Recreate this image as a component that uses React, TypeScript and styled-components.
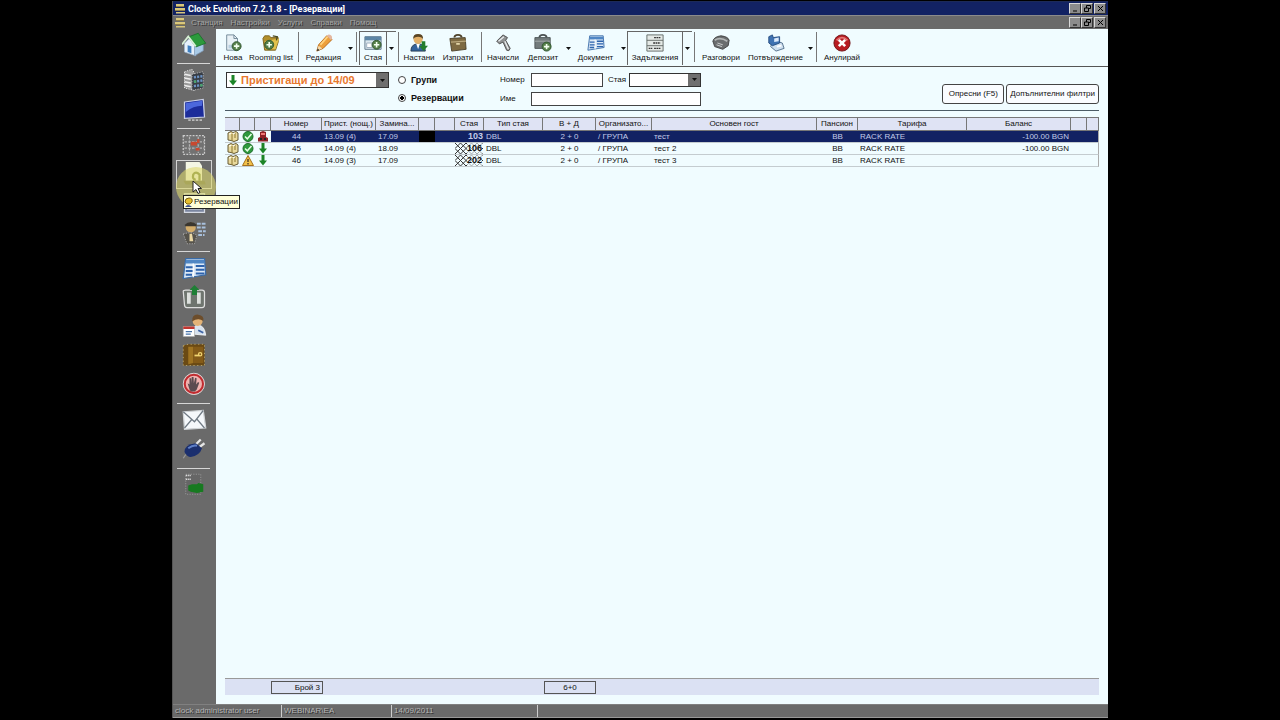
import React from "react";
import styled, { createGlobalStyle } from "styled-components";

const Global = createGlobalStyle`
  * { box-sizing: border-box; }
  body { margin: 0; background: #000; }
  button, input, select { font: inherit; color: inherit; }
`;

const navy = "#122263";
const grey = "#6a6a6a";
const paper = "#f0fcff";
const sans = `"Liberation Sans", Arial, sans-serif`;

const Stage = styled.div`
  min-height: 100vh;
  padding: 1px 172px 2px;
  display: flex;
  flex-direction: column;
  font-family: ${sans};
  font-size: 8px;
  line-height: 12px;
  color: #111;
`;
const Frame = styled.div`
  flex: 1;
  display: flex;
  flex-direction: column;
  background: ${grey};
  border-left: 1px solid #555;
`;
const Bar = styled.header<{ $tone: "title" | "menu" }>`
  height: 14px;
  display: flex;
  align-items: center;
  gap: 2px;
  padding: 0 2px;
  background: ${(p) => (p.$tone === "title" ? navy : grey)};
  border-top: 1px solid ${(p) => (p.$tone === "title" ? "#1c2a58" : "#8b8b8b")};
`;
const Title = styled.h1`
  margin: 0;
  flex: 1;
  font: bold 9px/12px Roboto, sans-serif;
  color: #fff;
`;
const Menu = styled.nav`
  flex: 1;
  display: flex;
  gap: 8px;
  padding-left: 3px;
`;
const MenuItem = styled.button`
  border: 0;
  padding: 0;
  background: none;
  color: #a4a4a4;
  text-shadow: 1px 1px 0 #333;
`;
const Caption = styled.div`
  display: flex;
`;
const CaptionButton = styled.button`
  width: 12px;
  height: 11px;
  padding: 0;
  display: grid;
  place-items: center;
  background: #8c8c8c;
  border: 1px solid;
  border-color: #d8d8d8 #333 #333 #d8d8d8;
  &:last-child { margin-left: 1px; }
`;
const Body = styled.div`
  flex: 1;
  display: flex;
`;
const Side = styled.nav`
  width: 43px;
  padding: 1px 2px 0 1px;
  position: relative;
`;
const SideButton = styled.button<{ $on?: boolean }>`
  width: 36px;
  height: 29px;
  margin-left: 2px;
  padding: 0;
  display: grid;
  place-items: center;
  background: none;
  border: 1px solid ${(p) => (p.$on ? "#d4d4d4" : "transparent")};
`;
const SideRule = styled.hr`
  margin: 4px 4px 2px 3px;
  border: 0;
  height: 1px;
  background: #d6d6d6;
`;
const Halo = styled.div`
  position: absolute;
  left: 3px;
  top: 138px;
  width: 40px;
  height: 40px;
  border-radius: 50%;
  background: rgba(222, 216, 110, 0.6);
`;
const Pointer = styled.svg`
  position: absolute;
  left: 19px;
  top: 151px;
  z-index: 2;
`;
const Tip = styled.div`
  position: absolute;
  left: 10px;
  top: 166px;
  height: 14px;
  padding: 0 1px 0 0;
  display: flex;
  align-items: center;
  gap: 1px;
  background: #ffffd8;
  border: 1px solid #222;
  white-space: nowrap;
  z-index: 1;
`;
const Main = styled.main`
  flex: 1;
  min-width: 0;
  display: flex;
  flex-direction: column;
  background: ${paper};
`;
const Tools = styled.div`
  height: 38px;
  padding: 2px 0 1px 4px;
  display: flex;
  border-bottom: 1px solid #555;
`;
const Tool = styled.button<{ $w: number; $down?: boolean }>`
  width: ${(p) => p.$w}px;
  padding: 3px 0 0;
  display: flex;
  flex-direction: column;
  align-items: center;
  justify-content: flex-start;
  white-space: nowrap;
  background: none;
  border: 0 solid #666;
  ${(p) => p.$down && "border-width: 1px 1px 0 1px; padding-top: 2px;"}
`;
const Drop = styled.button<{ $down?: boolean }>`
  width: 8px;
  padding: 0;
  display: grid;
  place-items: center;
  background: none;
  border: 0 solid #666;
  ${(p) => p.$down && "width: 9px; border-top-width: 1px;"}
`;
const Rule = styled.i`
  width: 1px;
  margin: 1px 2px 3px;
  background: #777;
`;
const Filters = styled.form`
  height: 44px;
  margin: 0 9px;
  padding: 5px 0 0 1px;
  display: flex;
  border-bottom: 1px solid #4c5c66;
`;
const Picker = styled.div`
  width: 163px;
  height: 16px;
  display: flex;
  align-items: center;
  border: 1px solid #333;
  background: #fff;
  svg { margin-left: 2px; }
`;
const PickerSelect = styled.select`
  flex: 1;
  min-width: 0;
  height: 14px;
  padding: 0 0 0 4px;
  border: 0;
  appearance: none;
  background: transparent;
  font: bold 11px/14px ${sans};
  color: #e8782e;
`;
const Knob = styled.span`
  width: 12px;
  align-self: stretch;
  display: grid;
  place-items: center;
  background: #6f6f6f;
  svg { margin: 0; }
`;
const Radios = styled.fieldset`
  width: 102px;
  margin: 2px 0 0 9px;
  padding: 0;
  border: 0;
  display: flex;
  flex-direction: column;
  gap: 6px;
`;
const RadioLabel = styled.label`
  height: 12px;
  display: flex;
  align-items: center;
  gap: 5px;
  font: bold 9px/12px ${sans};
`;
const Radio = styled.input`
  appearance: none;
  width: 8px;
  height: 8px;
  margin: 0;
  border: 1px solid #444;
  border-radius: 50%;
  background: #fff;
  &:checked { background: radial-gradient(circle, #000 0 2px, #fff 2px); }
`;
const Fields = styled.div`
  display: grid;
  grid-template-columns: 31px 72px 26px 72px;
  grid-template-rows: 15px 15px;
  row-gap: 4px;
  align-items: center;
`;
const FieldLabel = styled.label<{ $inset?: boolean }>`
  padding-left: ${(p) => (p.$inset ? 5 : 0)}px;
`;
const Box = styled.input<{ $wide?: boolean }>`
  width: 100%;
  height: 14px;
  padding: 0 2px;
  border: 1px solid #444;
  background: #fff;
  ${(p) => p.$wide && "grid-column: 2 / 5;"}
`;
const RoomPick = styled.div`
  height: 14px;
  display: flex;
  border: 1px solid #333;
  background: #fff;
`;
const RoomSelect = styled.select`
  flex: 1;
  min-width: 0;
  padding: 0;
  border: 0;
  appearance: none;
  background: transparent;
`;
const Actions = styled.div`
  margin: 12px 0 0 auto;
  display: flex;
  gap: 2px;
`;
const Action = styled.button`
  height: 20px;
  padding: 0 3px;
  min-width: 62px;
  border: 1px solid #444;
  border-radius: 3px;
  background: #fafcff;
  white-space: nowrap;
`;
const Grid = styled.table`
  margin: 6px 9px 0;
  width: calc(100% - 18px);
  table-layout: fixed;
  border-collapse: separate;
  border-spacing: 0;
`;
const Head = styled.th`
  height: 14px;
  padding: 0;
  line-height: 12px;
  font-weight: normal;
  text-align: center;
  white-space: nowrap;
  overflow: hidden;
  background: #dfe3f4;
  border: solid #777;
  border-width: 1px 1px 1px 0;
`;
const Row = styled.tr<{ $on?: boolean }>`
  color: ${(p) => (p.$on ? "#c3cbe8" : "#111")};
  td { background: ${(p) => (p.$on ? navy : "transparent")}; }
  td:nth-child(-n + 3) { background: transparent; }
  td:last-child { border-right: 1px solid #aaa; }
`;
const Cell = styled.td<{ $align?: string; $bold?: boolean }>`
  height: 12px;
  padding: 0 2px;
  line-height: 11px;
  text-align: ${(p) => p.$align || "left"};
  white-space: nowrap;
  overflow: hidden;
  border-bottom: 1px solid #c4ccd0;
  ${(p) => p.$bold && `font: bold 9px/11px ${sans}; padding: 0 1px;`}
  svg { display: block; margin: 0 auto; }
`;
const RoomCell = styled.span`
  display: flex;
  justify-content: flex-end;
`;
const BlackCell = styled.i`
  display: block;
  height: 11px;
  margin: 0 -2px;
  background: #000;
`;
const Summary = styled.footer`
  height: 17px;
  margin: auto 9px 9px;
  display: flex;
  align-items: center;
  padding-left: 46px;
  gap: 221px;
  background: #dbe1f3;
  border-top: 1px solid #999;
`;
const Total = styled.output<{ $end?: boolean }>`
  width: 52px;
  height: 13px;
  padding: 0 2px;
  line-height: 11px;
  text-align: ${(p) => (p.$end ? "right" : "center")};
  border: 1px solid #555;
`;
const Status = styled.footer`
  height: 14px;
  display: flex;
  line-height: 11px;
  color: #b4b4b4;
  border-top: 1px solid #808080;
  border-bottom: 1px solid #999;
  text-shadow: 1px 1px 0 #333;
`;
const Pane = styled.span<{ $w?: number }>`
  ${(p) => (p.$w ? `width: ${p.$w}px;` : "flex: 1;")}
  padding-left: 2px;
  border-right: ${(p) => (p.$w ? "1px solid #ccc" : "0")};
`;

/* ---------- drawings ---------- */
const Svg = ({ s = 20, children }: { s?: number; children: React.ReactNode }) => (
  <svg width={s} height={s} viewBox="0 0 20 20" aria-hidden="true">{children}</svg>
);
const Tri = () => (
  <svg width="5" height="3" viewBox="0 0 5 3" aria-hidden="true"><path d="M0 0h5L2.500 3z" fill="#111" /></svg>
);
const Arrow = ({ w = 8 }: { w?: number }) => (
  <svg width={w} height="11" viewBox="0 0 8 11" aria-hidden="true">
    <path d="M2.500 0h3v5.500h2.500L4 10.500 0 5.500h2.500z" fill="#1c8427" />
  </svg>
);
const AppLogo = () => (
  <svg width="11" height="11" viewBox="0 0 11 11" aria-hidden="true">
    <path d="M1 1h8v2H1zM0 5h10v2H0zM1 9h9v1.500H1z" fill="#d9c77c" />
    <path d="M1 3.500h8M0 7.500h10" stroke="#8f7f4a" />
  </svg>
);
const Plus = ({ x, y }: { x: number; y: number }) => (
  <g transform={`translate(${x} ${y})`}>
    <circle r="5" fill="#557f48" stroke="#2f5530" />
    <path d="M-3 0h6M0-3v6" stroke="#f4fff0" strokeWidth="1.800" />
  </g>
);
const NewIcon = () => (
  <Svg s={18}><path d="M3 1h8l4 4v13H3z" fill="#e8f1f6" stroke="#6d8594" /><path d="M11 1v4h4" fill="none" stroke="#6d8594" /><path d="M5 12h5v4H5z" fill="#b9cfe0" /><Plus x={14} y={13.500} /></Svg>
);
const FolderIcon = () => (
  <Svg s={18}><path d="M1 5l2-3h5l2 2h8v5l-3 9H3z" fill="#b28f2b" stroke="#7a611d" /><path d="M3 8l16-3-4 12H4z" fill="#e2c14c" /><path d="M12 2l5 1-1 4" fill="none" stroke="#4a4a20" strokeWidth="1.500" /><Plus x={8} y={12} /></Svg>
);
const PencilIcon = () => (
  <Svg s={18}><path d="M2 19l2-7L13 2l6 4L9 16z" fill="#eda03c" stroke="#b36a1d" /><path d="M13 2l2-1.500q4 0 4 4L18 7z" fill="#e3b7a0" /><path d="M2 19l2-6 4 3z" fill="#f4dcb0" /><path d="M2 19l1-3 2 2z" fill="#222" /><path d="M6 12l8-9" stroke="#ffd27e" strokeWidth="2" /></Svg>
);
const RoomIcon = () => (
  <Svg s={18}><path d="M1 3h18v14H1z" fill="#dbe7ee" stroke="#5a7284" /><path d="M1 3h18v4H1z" fill="#5d86a6" /><path d="M3 10h6v5H3z" fill="#fff" stroke="#9ab" /><Plus x={14} y={12} /></Svg>
);
const PersonIcon = () => (
  <Svg s={18}><path d="M1 19q0-8 8-8t8 8z" fill="#34639c" stroke="#23364d" /><path d="M7 11l2 6 2-6z" fill="#fff" /><circle cx="9" cy="6" r="5" fill="#e3b068" /><path d="M3.500 6Q3 0 9 0q6 0 5.500 6-1-3-5.500-3T3.500 6z" fill="#5a4524" /><path d="M13 8h4v5h3l-5 6-5-6h3z" fill="#237c2c" /></Svg>
);
const CaseIcon = () => (
  <Svg s={18}><path d="M6 4q0-3 4-3t4 3" fill="none" stroke="#4e422b" strokeWidth="2" /><path d="M1 5l17-1 1 13-16 2z" fill="#7e6a42" stroke="#4b3f28" /><path d="M2 9l17-1" stroke="#b9a77c" strokeWidth="1.500" /><path d="M8 11h4" stroke="#e2d3a6" strokeWidth="2" /></Svg>
);
const HammerIcon = () => (
  <Svg s={18}><path d="M3 8l7-7 5 3-2 3 5 9q-1 4-4 2L10 9l-4 2z" fill="#8f9192" stroke="#4a4a4a" /><path d="M5 8l6-5M12 8l4 9" stroke="#e9eced" strokeWidth="1.500" /></Svg>
);
const DepositIcon = () => (
  <Svg s={18}><path d="M6 4q0-3 4-3t4 3" fill="none" stroke="#4b5152" strokeWidth="2" /><path d="M1 4h17v12H1z" fill="#737b7c" stroke="#4a5152" /><path d="M1 8h17" stroke="#a9b0b1" /><Plus x={14} y={14} /></Svg>
);
const DocIcon = ({ s = 18 }: { s?: number }) => (
  <Svg s={s}><path d="M3 2h15l1 13-18 3z" fill="#dce9f6" stroke="#3a6ca8" /><path d="M3 3h15v3H3z" fill="#4f86c4" /><path d="M3 9h6M3 12h6M3 15h5M11 8h7M11 11h7M11 14h7" stroke="#2d63ad" strokeWidth="1.500" /><path d="M9 6v11" stroke="#fff" /></Svg>
);
const LedgerIcon = () => (
  <Svg s={18}><path d="M1 1h18v18H1z" fill="#e4e9e6" stroke="#5f6663" /><path d="M1 7h18M1 13h18" stroke="#5f6663" /><path d="M9 4h7M8 10h8M3 16h4M9 16h7" stroke="#333" strokeWidth="1.500" strokeDasharray="2 .6" /></Svg>
);
const PhoneIcon = () => (
  <Svg s={18}><path d="M1 8q1-5 9-6 8 1 9 5l-1 6-6 4-9-3z" fill="#6a6d6e" stroke="#3e4041" /><path d="M3 7q6-4 14 1" fill="none" stroke="#b2b5b6" strokeWidth="2" /><path d="M6 10l6 2M5 12l6 2" stroke="#d2d5d6" /></Svg>
);
const ConfirmIcon = () => (
  <Svg s={18}><path d="M7 7l10 3 2 6-9 3-6-5z" fill="#cfe0f0" stroke="#4e6b87" /><path d="M2 3l4-2 1 3 7-1v7l-8 3-4-3z" fill="#3f72b2" stroke="#244c80" /><path d="M8 5l5-1v4l-5 1z" fill="#dceafc" /><path d="M11 14l5-1" stroke="#fff" strokeWidth="2" /></Svg>
);
const CancelIcon = () => (
  <Svg s={18}><circle cx="10" cy="10" r="9" fill="#b81c22" stroke="#6d1114" /><path d="M4 7q6-6 12 0" fill="none" stroke="#e37a7a" strokeWidth="2" /><path d="M6.500 6.500l7 7M13.500 6.500l-7 7" stroke="#fff" strokeWidth="3" /></Svg>
);

const HouseIcon = () => (
  <Svg s={25}>
    <path d="M2 9l4-4 5 6v8l-9-3z" fill="#e6f0fa" stroke="#9db4cc" strokeWidth=".6" />
    <path d="M10 11l7-2v6l-7 4z" fill="#a9cbe8" stroke="#7f98b5" strokeWidth=".6" />
    <path d="M4.500 10.500l3 .8v5.700l-3-1z" fill="#3f7fc0" />
    <path d="M5 4l8-3 6 8-8 3z" fill="#2c9a3c" stroke="#146a24" strokeWidth=".6" />
    <path d="M0 10l5-6.500 6 8" fill="none" stroke="#d8efd6" strokeWidth="1.400" />
  </Svg>
);
const HotelIcon = () => (
  <Svg s={25}><path d="M2 3l6-2 2 3v14l-8-2z" fill="#9a9a9a" stroke="#dedede" strokeWidth=".8" strokeDasharray="1 1" /><path d="M8 5l9-2v13l-9 2z" fill="#383d45" stroke="#ccc" strokeWidth=".6" strokeDasharray="1 1" /><path d="M2 5l5 1M2 8l5 1M2 11l5 1M2 14l5 1" stroke="#eee" strokeWidth="1.300" /><path d="M9.500 7.500l7-1M9.500 11l7-1M9.500 14.500l7-1" stroke="#6d93c4" strokeWidth="2" strokeDasharray="1.700 .9" /><path d="M9.500 11l2-.3M14.500 14l2-.3" stroke="#4ba368" strokeWidth="2" /></Svg>
);
const MonitorIcon = () => (
  <Svg s={25}><path d="M2 4l15-2 1 14-16 1z" fill="#1c2c9a" stroke="#ccd2e6" /><path d="M3 5l13-2v4q-7 0-13 5z" fill="#4c68dc" /><path d="M5 18.500h11" stroke="#bbb" strokeWidth="1.300" strokeDasharray="2 1" /></Svg>
);
const PlanIcon = () => (
  <Svg s={25}><path d="M1 2h17v15H1z" fill="#727272" stroke="#ccc" strokeDasharray="1.500 1" /><path d="M2 7h16M2 12h16M6 3v13M13 3v13" stroke="#b4b4b4" strokeDasharray="2 1" /><path d="M7 7h5v3H7zM12 5h2v3h-2zM11 12h3v2h-3z" fill="#c8482f" /></Svg>
);
const ResIcon = () => (
  <Svg s={25}><path d="M3 0h11l2 3v12H3z" fill="#f4f6e4" /><path d="M1 15h17l1 3H3z" fill="#5d5e3c" /><path d="M14 15v-5q-3-3-5 0-1 4 2 4" fill="none" stroke="#6d7a2c" strokeWidth="1.800" /></Svg>
);
const FormIcon = () => (
  <Svg s={25}><path d="M2 2h16v15H2z" fill="#7b86a0" stroke="#d5d9e2" /><path d="M4 14h12" stroke="#eee" strokeWidth="1.500" /></Svg>
);
const WaiterIcon = () => (
  <Svg s={25}><circle cx="7" cy="6" r="4" fill="#d3ad6b" /><path d="M2 4q5-5 10 0l-1 1H3z" fill="#3a362f" /><path d="M1 11l6-1 5 2-2 7H4z" fill="#56534c" stroke="#bbb" strokeWidth=".6" strokeDasharray="1 1" /><path d="M6 11h2l1 6H6z" fill="#ecd9a6" /><path d="M12 3h7M12 6h7M13 9h6M13 12h5" stroke="#a8c0dc" strokeWidth="1.600" strokeDasharray="3 .8" /></Svg>
);
const BasketIcon = () => (
  <Svg s={25}><path d="M1 5q0-1 2-1h13q2 0 2 2v10q0 2-2 2H4q-2 0-2-2z" fill="#6f756f" stroke="#dedede" /><path d="M4 6h3v9H4zM12 6h3v9h-3z" fill="#dde0dd" /><path d="M8 8V4H6l4-4 4 4h-2v4z" fill="#1e7f35" /></Svg>
);
const ClerkIcon = () => (
  <Svg s={25}><path d="M8 16q0-7 5-7t6 8z" fill="#d7e2ee" stroke="#fff" strokeWidth=".6" /><circle cx="12.500" cy="5.500" r="4" fill="#e3b377" /><path d="M8 6q0-6 5-5.500 5 .5 4 5-4-3-9 .5z" fill="#6c4d2b" /><path d="M1 10h9v8H1z" fill="#fff" stroke="#aaa" strokeWidth=".5" /><path d="M1 10h9v2H1z" fill="#c3352f" /><path d="M3 14h5M3 16h4" stroke="#4672a8" /><path d="M13 13l4 2" stroke="#3f64a4" strokeWidth="1.500" /></Svg>
);
const DoorIcon = () => (
  <Svg s={25}><path d="M1 2l4-1h13v17H1z" fill="#6b4a13" stroke="#e0c97c" strokeWidth=".5" strokeDasharray="1 2" /><path d="M5 3h4v13l-4 1z" fill="#9f7422" /><path d="M9 3h8v13H9z" fill="#845b18" /><path d="M10 10h4" stroke="#f0d470" strokeWidth="1.400" /><circle cx="14.500" cy="9" r="1.300" fill="none" stroke="#f0d470" /></Svg>
);
const StopIcon = () => (
  <Svg s={25}><circle cx="9.500" cy="9.500" r="8.500" fill="#f0b3b0" stroke="#d8d8d8" strokeWidth=".8" /><circle cx="9.500" cy="9.500" r="7.300" fill="none" stroke="#c02c30" strokeWidth="1.600" /><path d="M6 14l-1.500-5 1.500 1V5h1.300v4l.5-5h1.400l.3 5 1-4.500 1.200.5-.4 5 1.500-2 1 .5-2 5.500-1.500 1.500H7z" fill="#5b4b50" /></Svg>
);
const MailIcon = () => (
  <Svg s={25}><path d="M1 3l16-1 2 14-17 1z" fill="#f5f8fb" stroke="#cfd3d6" /><path d="M1 3l9 8 7-9M2 16l6-7M18 16l-6-7" fill="none" stroke="#707a84" /></Svg>
);
const PlugIcon = () => (
  <Svg s={25}><path d="M11 6l4-4M14 8l4-3" stroke="#e6e6e6" strokeWidth="1.800" /><path d="M2 12q0-6 9-7l5 4q-2 6-9 7-3 0-5-4z" fill="#1b2f6e" /><path d="M5 9q4-3 7-2" fill="none" stroke="#5f80c8" strokeWidth="1.500" /><path d="M3 14l-2 3" stroke="#999" /></Svg>
);
const ExitIcon = () => (
  <Svg s={25}><path d="M3 1h12v16H3z" fill="#666" stroke="#999" strokeWidth=".7" strokeDasharray="1 1" /><path d="M3 2h4M3 5h4" stroke="#ddd" strokeDasharray="1 .5" strokeWidth="1.300" /><path d="M5 10l3-1h4l1-1 4 1v6l-5 1-5-1-2-1z" fill="#177a20" /></Svg>
);

const BookMark = () => (
  <svg width="12" height="11" viewBox="0 0 12 11" aria-hidden="true"><path d="M1 2l3-1.500 2 1 3-1L11 2v7l-4 1.500L4 9.500 1 9z" fill="#e9d99b" stroke="#675a35" /><path d="M5 3v7M8 2v5" stroke="#8b7630" /><path d="M2 3l2-.5M6 3l2-1" stroke="#fff" /></svg>
);
const OkMark = () => (
  <svg width="12" height="11" viewBox="0 0 12 11" aria-hidden="true"><circle cx="6" cy="5.500" r="5" fill="#2e9a3d" stroke="#1d6c29" /><path d="M3 5.500l2.300 2.300L9.500 3" fill="none" stroke="#e6ffe6" strokeWidth="1.500" /></svg>
);
const WarnMark = () => (
  <svg width="12" height="11" viewBox="0 0 12 11" aria-hidden="true"><path d="M6 .5L11.500 10.500H.5z" fill="#f2c14a" stroke="#a5701c" /><path d="M6 4v3M6 8v1.500" stroke="#432" strokeWidth="1.300" /></svg>
);
const GuestMark = () => (
  <svg width="10" height="11" viewBox="0 0 10 11" aria-hidden="true"><path d="M0 10.500V7l2-1V1l3-1 3 1v5l2 1v3.500z" fill="#8e2026" /><path d="M3 2h4v2H3z" fill="#e77" /><path d="M2 8h2M6 8h2" stroke="#222" strokeWidth="2" /></svg>
);
const Hatch = () => (
  <svg width="28" height="11" viewBox="0 0 28 11" aria-hidden="true">
    <path d="M0 0l11 11M5.500 0l11 11M11 0l11 11M16.500 0L27.500 11M22 0l6 6M0 5.500L5.500 11M5.500 0L0 5.500M11 0L0 11M16.500 0l-11 11M22 0L11 11M27.500 0l-11 11M28 5l-6 6" stroke="#333" fill="none" />
  </svg>
);

const HatchBox = styled.span`
  display: flex;
  height: 11px;
  margin: 0 -1px;
  > svg { flex: none; margin: 0; }
`;
const HatchText = styled.b`
  margin-left: -16px;
  background: ${paper}99;
`;

const Captions = ({ scope }: { scope: string }) => (
  <Caption>
    <CaptionButton aria-label={`Minimize ${scope}`}><svg width="7" height="7"><path d="M1 6h4" stroke="#000" /></svg></CaptionButton>
    <CaptionButton aria-label={`Restore ${scope}`}><svg width="7" height="7"><path d="M2.500 3V.5h4v3H5M.5 3h4v3.500h-4z" fill="none" stroke="#000" /></svg></CaptionButton>
    <CaptionButton aria-label={`Close ${scope}`}><svg width="7" height="7"><path d="M1 1l5 5M6 1L1 6" stroke="#000" /></svg></CaptionButton>
  </Caption>
);

const side: Array<Array<[string, () => React.ReactElement]>> = [
  [["Начало", HouseIcon]],
  [["Хотел", HotelIcon], ["Рецепция", MonitorIcon]],
  [["План", PlanIcon], ["Резервации", ResIcon], ["Форми", FormIcon], ["Гости", WaiterIcon]],
  [["Документи", () => <DocIcon s={25} />], ["Продажби", BasketIcon], ["График", ClerkIcon], ["Врата", DoorIcon], ["Стоп", StopIcon]],
  [["Поща", MailIcon], ["Връзка", PlugIcon]],
  [["Изход", ExitIcon]],
];

const cols: Array<[number | null, string]> = [
  [15, ""], [15, ""], [16, ""], [51, "Номер"], [54, "Прист. (нощ.)"], [43, "Замина..."], [16, ""], [20, ""],
  [29, "Стая"], [59, "Тип стая"], [53, "В + Д"], [56, "Организато..."], [null, "Основен гост"], [41, "Пансион"],
  [109, "Тарифа"], [104, "Баланс"], [16, ""], [12, ""],
];

const bookings = [
  { no: "44", from: "13.09 (4)", to: "17.09", room: "103", guest: "тест", balance: "-100.00 BGN", ok: true, in: true },
  { no: "45", from: "14.09 (4)", to: "18.09", room: "106", guest: "тест 2", balance: "-100.00 BGN", ok: true, in: false },
  { no: "46", from: "14.09 (3)", to: "17.09", room: "202", guest: "тест 3", balance: "", ok: false, in: false },
];

export default function App() {
  return (
    <Stage>
      <Global />
      <Frame>
        <Bar $tone="title">
          <AppLogo />
          <Title>Clock Evolution 7.2.1.8 - [Резервации]</Title>
          <Captions scope="application" />
        </Bar>
        <Bar $tone="menu">
          <AppLogo />
          <Menu>
            {["Станция", "Настройки", "Услуги", "Справки", "Помощ"].map((m) => <MenuItem key={m}>{m}</MenuItem>)}
          </Menu>
          <Captions scope="window" />
        </Bar>
        <Body>
          <Side>
            {side.map((group, i) => (
              <React.Fragment key={i}>
                {i > 0 && <SideRule />}
                {group.map(([name, Icon]) => (
                  <SideButton key={name} aria-label={name} $on={name === "Резервации"}><Icon /></SideButton>
                ))}
              </React.Fragment>
            ))}
            <Halo />
            <Tip role="tooltip">
              <svg width="9" height="11" viewBox="0 0 9 11"><path d="M1 5q0-4 4-4t3 4l-2 2H3z" fill="#e8c02e" stroke="#7a5f10" /><path d="M1 10q3-4 7 0z" fill="#3c4f8c" /></svg>
              Резервации
            </Tip>
            <Pointer width="10" height="15" viewBox="0 0 10 15"><path d="M1 1v11l3-2.500 2 4 2-1-2-4h3.500z" fill="#fff" stroke="#222" /></Pointer>
          </Side>
          <Main>
            <Tools>
              <Tool $w={26}><NewIcon />Нова</Tool>
              <Tool $w={50}><FolderIcon />Rooming list</Tool>
              <Rule />
              <Tool $w={45}><PencilIcon />Редакция</Tool>
              <Drop aria-label="Още редакция"><Tri /></Drop>
              <Rule />
              <Tool $w={28} $down><RoomIcon />Стая</Tool>
              <Drop $down aria-label="Още стая"><Tri /></Drop>
              <Rule />
              <Tool $w={36}><PersonIcon />Настани</Tool>
              <Tool $w={42}><CaseIcon />Изпрати</Tool>
              <Rule />
              <Tool $w={38}><HammerIcon />Начисли</Tool>
              <Tool $w={42}><DepositIcon />Депозит</Tool>
              <Drop aria-label="Още депозит"><Tri /></Drop>
              <Tool $w={47}><DocIcon />Документ</Tool>
              <Drop aria-label="Още документ"><Tri /></Drop>
              <Tool $w={56} $down><LedgerIcon />Задължения</Tool>
              <Drop $down aria-label="Още задължения"><Tri /></Drop>
              <Rule />
              <Tool $w={48}><PhoneIcon />Разговори</Tool>
              <Tool $w={61}><ConfirmIcon />Потвърждение</Tool>
              <Drop aria-label="Още потвърждение"><Tri /></Drop>
              <Rule />
              <Tool $w={46}><CancelIcon />Анулирай</Tool>
            </Tools>
            <Filters onSubmit={(e) => e.preventDefault()}>
              <Picker>
                <Arrow />
                <PickerSelect aria-label="Изглед"><option>Пристигащи до 14/09</option></PickerSelect>
                <Knob><Tri /></Knob>
              </Picker>
              <Radios aria-label="Вид">
                <RadioLabel><Radio type="radio" name="kind" />Групи</RadioLabel>
                <RadioLabel><Radio type="radio" name="kind" defaultChecked />Резервации</RadioLabel>
              </Radios>
              <Fields>
                <FieldLabel htmlFor="number">Номер</FieldLabel>
                <Box id="number" />
                <FieldLabel htmlFor="room" $inset>Стая</FieldLabel>
                <RoomPick><RoomSelect id="room"><option></option></RoomSelect><Knob><Tri /></Knob></RoomPick>
                <FieldLabel htmlFor="name">Име</FieldLabel>
                <Box id="name" $wide />
              </Fields>
              <Actions>
                <Action type="button">Опресни (F5)</Action>
                <Action type="button">Допълнителни филтри</Action>
              </Actions>
            </Filters>
            <Grid>
              <colgroup>{cols.map(([w], i) => <col key={i} style={w ? { width: w } : undefined} />)}</colgroup>
              <thead><tr>{cols.map(([, t], i) => <Head key={i}>{t}</Head>)}</tr></thead>
              <tbody>
                {bookings.map((b) => (
                  <Row key={b.no} $on={b.in}>
                    <Cell $bold><BookMark /></Cell>
                    <Cell $bold>{b.ok ? <OkMark /> : <WarnMark />}</Cell>
                    <Cell $bold>{b.in ? <GuestMark /> : <Arrow />}</Cell>
                    <Cell $align="center">{b.no}</Cell>
                    <Cell>{b.from}</Cell>
                    <Cell>{b.to}</Cell>
                    <Cell>{b.in && <BlackCell />}</Cell>
                    <Cell />
                    <Cell $bold $align="right">
                      {b.in ? <RoomCell>{b.room}</RoomCell> : <HatchBox><Hatch /><HatchText>{b.room}</HatchText></HatchBox>}
                    </Cell>
                    <Cell>DBL</Cell>
                    <Cell $align="center">2 + 0</Cell>
                    <Cell>/ ГРУПА</Cell>
                    <Cell>{b.guest}</Cell>
                    <Cell $align="center">BB</Cell>
                    <Cell>RACK RATE</Cell>
                    <Cell $align="right">{b.balance}</Cell>
                    <Cell />
                    <Cell />
                  </Row>
                ))}
              </tbody>
            </Grid>
            <Summary>
              <Total $end>Брой 3</Total>
              <Total>6+0</Total>
            </Summary>
          </Main>
        </Body>
        <Status>
          <Pane $w={109}>clock administrator user</Pane>
          <Pane $w={110}>WEBINAR\EA</Pane>
          <Pane $w={146}>14/09/2011</Pane>
          <Pane />
        </Status>
      </Frame>
    </Stage>
  );
}
